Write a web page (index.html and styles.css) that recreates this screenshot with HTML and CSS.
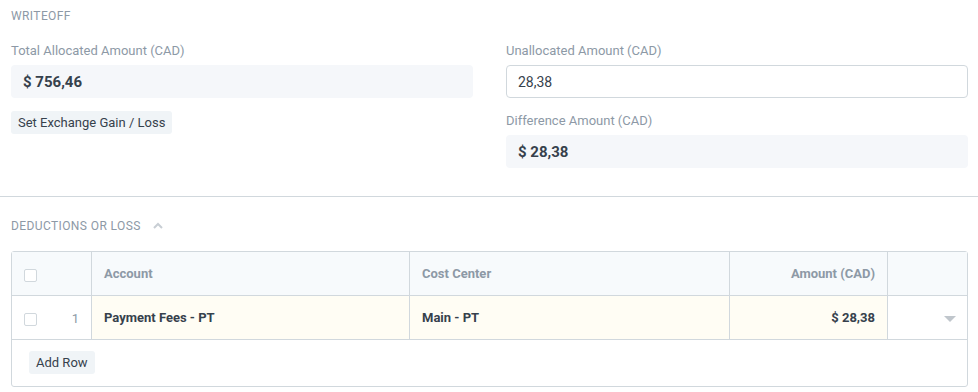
FILE: index.html
```html
<!DOCTYPE html>
<html lang="en">
<head>
  <meta charset="UTF-8">
  <title>Payment Entry - Writeoff</title>
  <link rel="stylesheet" href="styles.css">
</head>
<body>
  <div class="form-section">
    <div class="section-head">Writeoff</div>
    <div class="section-body">
      <div class="form-column">
        <div class="form-group">
          <div class="control-label">Total Allocated Amount (CAD)</div>
          <div class="control-value">$ 756,46</div>
        </div>
        <button class="btn">Set Exchange Gain / Loss</button>
      </div>
      <div class="form-column">
        <div class="form-group">
          <div class="control-label">Unallocated Amount (CAD)</div>
          <input type="text" class="form-control" value="28,38">
        </div>
        <div class="form-group">
          <div class="control-label">Difference Amount (CAD)</div>
          <div class="control-value">$ 28,38</div>
        </div>
      </div>
    </div>
  </div>

  <div class="form-section bordered">
    <div class="section-head">
      Deductions or Loss
      <svg class="collapse-icon" width="10" height="7" viewBox="0 0 10 7">
        <polyline points="1,6 5,2 9,6" fill="none" stroke="#c8ced4" stroke-width="2"/>
      </svg>
    </div>

    <div class="grid">
      <div class="grid-row grid-heading">
        <div class="grid-cell row-index"><span class="checkbox"></span></div>
        <div class="grid-cell">Account</div>
        <div class="grid-cell">Cost Center</div>
        <div class="grid-cell text-right">Amount (CAD)</div>
        <div class="grid-cell"></div>
      </div>
      <div class="grid-row grid-data">
        <div class="grid-cell row-index"><span class="checkbox"></span><span class="idx">1</span></div>
        <div class="grid-cell editable">Payment Fees - PT</div>
        <div class="grid-cell editable">Main - PT</div>
        <div class="grid-cell editable text-right">$ 28,38</div>
        <div class="grid-cell row-menu"><span class="caret"></span></div>
      </div>
      <div class="grid-footer">
        <button class="btn">Add Row</button>
      </div>
    </div>
  </div>
</body>
</html>
```

FILE: styles.css
```css
body { margin: 0; font-family: Roboto, "Liberation Sans", sans-serif; font-size: 13px; color: #36414c; background: #fff; }

.form-section { padding: 7px 10px 28px 11px; }
.form-section.bordered { border-top: 1px solid #d1d8dd; padding-top: 20px; padding-bottom: 0; }
.section-head { font-size: 12px; line-height: 18px; letter-spacing: 0.4px; text-transform: uppercase; color: #8d99a6; display: flex; align-items: center; gap: 12px; }
.bordered .section-head { margin-bottom: 16px; }
.collapse-icon { display: block; margin-top: -1px; }

.section-body { display: grid; grid-template-columns: 1fr 1fr; gap: 33px; margin-top: 16px; }
.form-group { margin-bottom: 13px; }
.form-group:last-child { margin-bottom: 0; }
.control-label { line-height: 20px; color: #8d99a6; margin-bottom: 4px; }
.control-value { height: 33px; box-sizing: border-box; padding: 0 12px; display: flex; align-items: center; background: #f5f7fa; border-radius: 4px; font-size: 15px; font-weight: bold; }
.form-control { display: block; width: 100%; height: 33px; box-sizing: border-box; padding: 0 11px; border: 1px solid #d1d8dd; border-radius: 4px; font: inherit; font-size: 14px; color: #36414c; background: #fff; }

.btn { display: block; font: inherit; font-size: 13px; color: #36414c; background: #f0f4f7; border: 0; border-radius: 3px; height: 23px; padding: 0 7px; }

.grid { border: 1px solid #d1d8dd; border-radius: 3px; }
.grid-row { display: grid; grid-template-columns: 79px 318px 320px 158px 1fr; border-bottom: 1px solid #d1d8dd; }
.grid-cell { height: 43px; display: flex; align-items: center; padding: 0 12px; border-left: 1px solid #d1d8dd; font-weight: bold; }
.grid-cell.row-index { border-left: 0; justify-content: space-between; font-weight: normal; }
.grid-heading { background: #f7fafc; }
.grid-heading .grid-cell { color: #8d99a6; }
.grid-data .editable { background: #fffdf4; }
.text-right { justify-content: flex-end; }
.checkbox { width: 11px; height: 11px; border: 1px solid #d1d8dd; border-radius: 2px; background: #fff; margin-top: 3px; }
.idx { color: #8d99a6; margin-top: 1px; }
.row-menu { justify-content: flex-end; padding-right: 11px; }
.caret { width: 0; height: 0; border-left: 6px solid transparent; border-right: 6px solid transparent; border-top: 6px solid #c0c6cc; margin-top: 3px; }
.grid-footer { padding: 11px 17px 12px; }
```
